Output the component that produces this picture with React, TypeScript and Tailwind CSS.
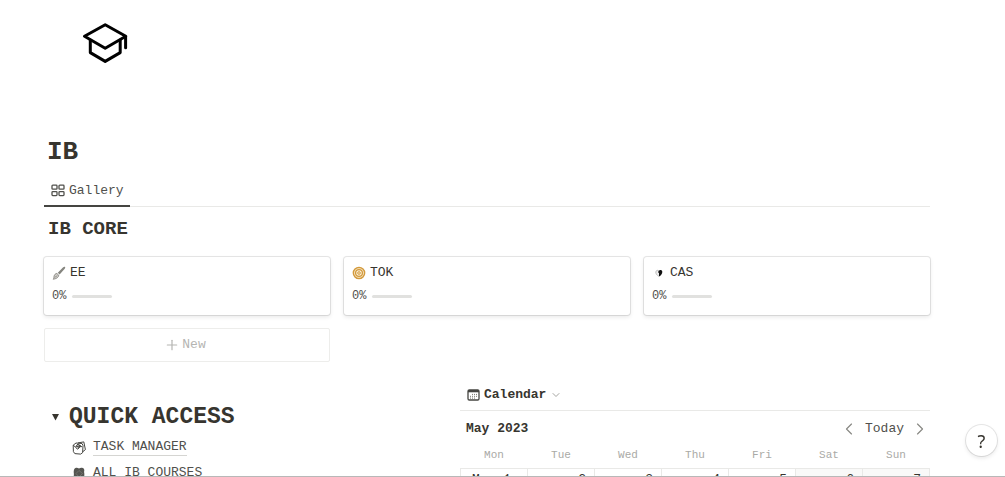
import { type ReactNode } from 'react'
import { ChevronDown, ChevronLeft, ChevronRight, Plus } from 'lucide-react'

const WEEKDAYS = ['Mon', 'Tue', 'Wed', 'Thu', 'Fri', 'Sat', 'Sun']
const DAYS = ['May 1', '2', '3', '4', '5', '6', '7']

function GraduationIcon() {
  return (
    <svg
      className="ml-9 h-[46px] w-[50px]"
      viewBox="0 0 50 46"
      fill="none"
      stroke="#000"
      strokeWidth="3"
      strokeLinejoin="round"
      strokeLinecap="round"
      aria-hidden="true"
    >
      <path d="M4.5 16.3 25.2 4.7 45.8 16.3 25.2 28.3Z" />
      <path d="M10.3 20v12.6l14.9 8.8 15-8.8V20" />
      <path d="M45.6 17v10.8" />
    </svg>
  )
}

function GalleryIcon() {
  return (
    <svg className="h-[13px] w-[14px]" viewBox="0 0 14 13" fill="none" stroke="#50504c" strokeWidth="1.3" aria-hidden="true">
      <rect x="1" y="1.2" width="5" height="4" rx="0.8" />
      <rect x="8" y="1.2" width="5" height="4" rx="0.8" />
      <rect x="1" y="7.6" width="5" height="4" rx="0.8" />
      <rect x="8" y="7.6" width="5" height="4" rx="0.8" />
    </svg>
  )
}

function BrushIcon() {
  return (
    <svg className="h-[14px] w-[14px]" viewBox="0 0 14 14" aria-hidden="true">
      <path d="M12.9.8c.7.5.2 1.5-.4 2.2L7.6 8.4 5.8 6.7 10.9 1.6c.7-.6 1.5-1.2 2-.8Z" fill="#85857f" />
      <path d="M4.9 7.5 6.7 9.2c-.1 1.8-1.6 3.4-5.5 4 .9-1 .6-1.6.9-3 .3-1.5 1.3-2.6 2.8-2.7Z" fill="#d4d3cf" stroke="#8b8983" strokeWidth="1" />
      <path d="m3 11.5 2-2" stroke="#77756f" strokeWidth="0.9" />
    </svg>
  )
}

function TargetIcon() {
  return (
    <svg className="h-[14px] w-[14px]" viewBox="0 0 14 14" fill="none" stroke="#d39a3c" aria-hidden="true">
      <circle cx="7" cy="7" r="5.6" fill="#fbf0d9" strokeWidth="1.5" />
      <circle cx="7" cy="7" r="3.4" strokeWidth="1.3" />
      <circle cx="7" cy="7" r="1.3" strokeWidth="1" />
    </svg>
  )
}

function HeartIcon() {
  return (
    <svg className="h-[14px] w-[14px]" viewBox="0 0 14 14" aria-hidden="true">
      <path d="M7 10.5C4.4 8.8 3.7 7.5 3.8 6c.2-2 2.4-2.2 3.2-.8" fill="#eee" stroke="#b4b4b4" strokeWidth="0.8" />
      <path d="M7 10.6V7L6 6.2l.8-1.5c1.1-1.3 3.5-.8 3.5 1.2 0 1.9-1.2 3.3-3.3 4.7Z" fill="#111" />
    </svg>
  )
}

function TaskIcon() {
  return (
    <svg className="h-[14px] w-[15px]" viewBox="0 0 15 14" fill="none" stroke="#454541" strokeWidth="1" strokeLinejoin="round" aria-hidden="true">
      <path d="M1.2 4.2 4 2l6 .5 1 2-.4 7.2-2 1.4-5.8-.5-1.4-2Z" />
      <path d="m6 1.9 5.8-1 1.6 7.7-2.7 2.2M1.2 4.2l2 1.6 6.8-.2" />
      <path d="m4.3 4.7 2-1.2 2.4 1.2-2 1.9-2.4-1.9Zm.6-1.5L8.4 5M3.5 6.5l2.3 1.7 1.9-2.1" />
    </svg>
  )
}

function CoursesIcon() {
  return (
    <svg className="h-[14px] w-[14px]" viewBox="0 0 14 14" fill="#555551" aria-hidden="true">
      <path d="M3.4 1c1.2-.5 2.4-.3 3.6.4 1.2-.7 2.6-.9 3.8-.4 1.3.5 1.7 1.7 1.4 3-.2 1 0 2 .2 3-.2 1 0 2-.2 3.2-.2 1.4-1.4 2.2-2.8 2-1-.2-1.6-.5-2.4-.4-.9-.1-1.6.3-2.6.4-1.4.1-2.4-.7-2.6-2-.2-1.1.1-2.1.1-3.2-.1-1-.3-2-.1-3 .1-1.300.500-2.500 1.600-3Z" />
      <path d="m4 6.500 3-3 3.500 3L7 10Z" fill="none" stroke="#858580" strokeWidth="0.6" />
    </svg>
  )
}

function CalendarIcon() {
  return (
    <svg className="h-[12px] w-[13px]" viewBox="0 0 13 12" aria-hidden="true">
      <rect x="1" y="1" width="11" height="10" rx="1.3" fill="none" stroke="#454541" strokeWidth="1.3" />
      <path d="M1 1h11v2.3H1z" fill="#454541" />
      <path d="M5 5.4h5.5M3 7.3h7.5M3 9.1h5.5" stroke="#77776f" strokeWidth="1" strokeDasharray="1 1" />
    </svg>
  )
}

function CoreCard({ icon, title }: { icon: ReactNode; title: string }) {
  return (
    <article className="h-[58px] rounded-[3px] px-2 pt-2 shadow-[0_0_0_1px_rgba(15,15,15,0.1),0_2px_4px_rgba(15,15,15,0.1)]">
      <a href="#" className="flex items-center gap-1 leading-4">
        {icon}
        <span>{title}</span>
      </a>
      <div className="mt-[7px] flex items-center gap-1.5 text-xs leading-4 text-[#50504c]">
        <span>0%</span>
        <span className="h-[3px] w-10 rounded-full bg-[#e1e1df]" />
      </div>
    </article>
  )
}

function QuickLink({ icon, label }: { icon: ReactNode; label: string }) {
  return (
    <li>
      <a href="#" className="flex items-center gap-1.5 text-[#50504c]">
        <span className="flex w-4 justify-center">{icon}</span>
        <span className="border-b border-[#d5d5d2] leading-4">{label}</span>
      </a>
    </li>
  )
}

function CalendarPanel() {
  return (
    <section aria-label="Calendar" className="min-w-0">
      <div className="flex h-8 items-center border-b border-[#e9e9e7] pl-[7px]">
        <button type="button" className="flex items-center gap-1 font-bold">
          <CalendarIcon />
          <span className="leading-4">Calendar</span>
          <ChevronDown className="size-3 text-[#a5a5a1]" strokeWidth={2} />
        </button>
      </div>
      <div className="flex h-9 items-center justify-between pl-1.5">
        <h3 className="font-bold">May 2023</h3>
        <div className="flex items-center gap-1.5">
          <button type="button" aria-label="Previous month">
            <ChevronLeft className="size-5 text-[#888884]" strokeWidth={1.4} />
          </button>
          <button type="button" className="text-[#50504c]">Today</button>
          <button type="button" aria-label="Next month">
            <ChevronRight className="size-5 text-[#888884]" strokeWidth={1.4} />
          </button>
        </div>
      </div>
      <table className="w-full table-fixed border-collapse">
        <thead>
          <tr>
            {WEEKDAYS.map((day) => (
              <th key={day} className="h-[21px] p-0 pb-1 text-[11px] leading-4 font-normal text-[#aaaaa6]">
                {day}
              </th>
            ))}
          </tr>
        </thead>
        <tbody>
          <tr>
            {DAYS.map((day) => (
              <td
                key={day}
                className="h-24 border border-[#e9e9e7] px-2 pt-[3px] text-right align-top leading-4 first:pr-4 nth-[n+6]:bg-[#f9f9f8]"
              >
                {day}
              </td>
            ))}
          </tr>
        </tbody>
      </table>
    </section>
  )
}

export default function App() {
  return (
    <div className="h-screen overflow-hidden border-b border-[#b8b8b8] bg-white font-['Liberation_Mono',monospace] text-[13px] text-[#37352f]">
      <main className="pt-5 pr-[75px] pl-11">
        <GraduationIcon />
        <h1 className="mt-[70px] pl-[3px] text-[26px] leading-8 font-bold">IB</h1>

        <nav className="mt-1.5 flex h-[33px] border-b border-[#e9e9e7]">
          <a href="#" className="flex h-[33px] items-center gap-1 border-b-2 border-[#454541] pt-0.5 pr-1.5 pl-[7px] text-[#50504c]">
            <GalleryIcon />
            <span>Gallery</span>
          </a>
        </nav>

        <h2 className="mt-2.5 pl-1 text-[19px] leading-6 font-bold">IB CORE</h2>

        <div className="mt-4 grid grid-cols-3 gap-x-3.5 gap-y-[13px]">
          <CoreCard icon={<BrushIcon />} title="EE" />
          <CoreCard icon={<TargetIcon />} title="TOK" />
          <CoreCard icon={<HeartIcon />} title="CAS" />
          <button
            type="button"
            className="flex h-[34px] items-center justify-center gap-0.5 rounded-xs border border-[#ededeb] pr-1 text-[#b5b5b2]"
          >
            <Plus className="size-4" strokeWidth={1.8} />
            <span>New</span>
          </button>
        </div>

        <div className="mt-[17px] grid grid-cols-[416fr_470fr]">
          <section className="pt-6 pl-2">
            <details open>
              <summary className="flex cursor-pointer list-none items-center gap-2.5">
                <svg className="h-[7px] w-[7px]" viewBox="0 0 7 7" fill="#37352f" aria-hidden="true">
                  <path d="M0 0h7L3.500 6.500Z" />
                </svg>
                <h2 className="text-[23px] leading-7 font-bold">QUICK ACCESS</h2>
              </summary>
              <ul className="mt-2 flex flex-col gap-[9px] pl-[19px]">
                <QuickLink icon={<TaskIcon />} label="TASK MANAGER" />
                <QuickLink icon={<CoursesIcon />} label="ALL IB COURSES" />
              </ul>
            </details>
          </section>
          <CalendarPanel />
        </div>
      </main>

      <button
        type="button"
        aria-label="Help"
        className="fixed right-2 bottom-[21px] flex size-[31px] items-center justify-center rounded-full bg-white font-['Noto_Sans',sans-serif] text-lg shadow-[0_0_0_1px_rgba(15,15,15,0.1),0_2px_4px_rgba(15,15,15,0.1)]"
      >
        ?
      </button>
    </div>
  )
}
